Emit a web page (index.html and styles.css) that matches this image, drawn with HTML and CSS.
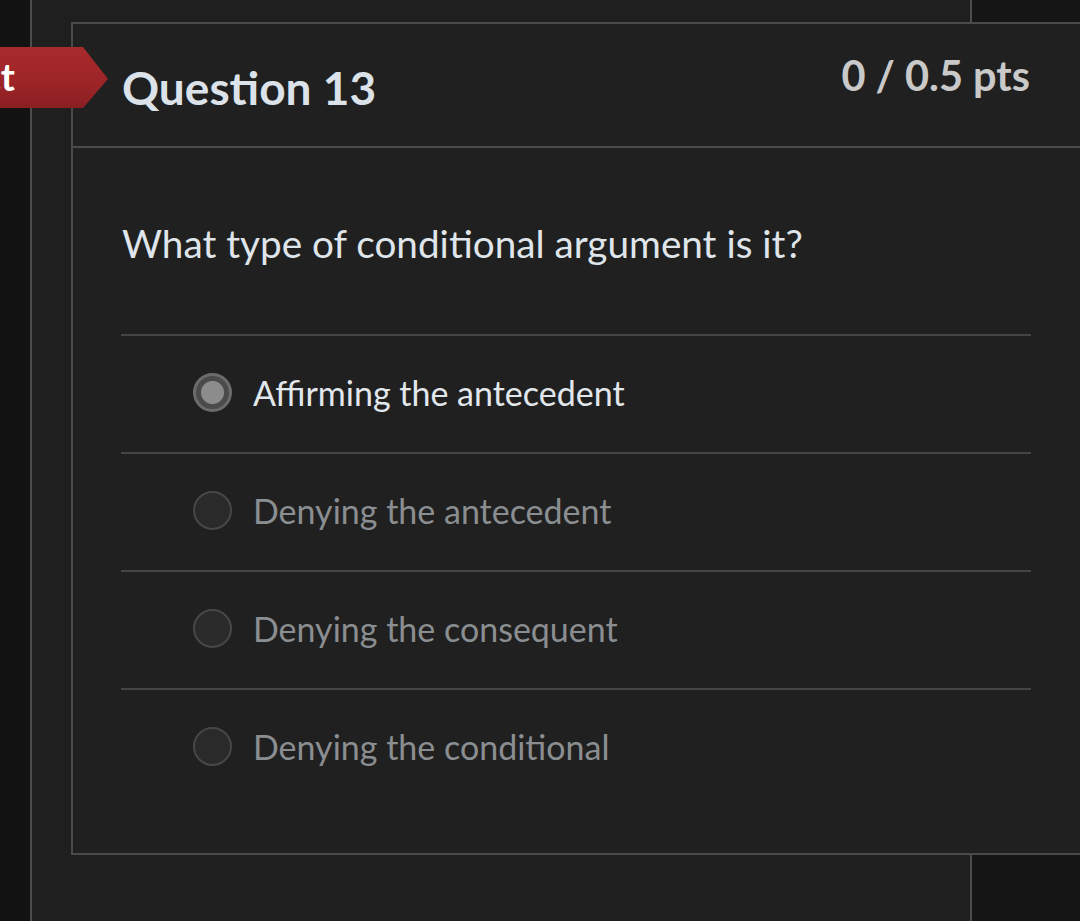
FILE: index.html
```html
<!DOCTYPE html>
<html lang="en">
<head>
<meta charset="utf-8">
<title>Question 13</title>
<link rel="stylesheet" href="styles.css">
</head>
<body>
<div class="page">
  <div class="leftbar"></div>
  <div class="main">
    <div class="card">
      <div class="flag"><span class="flag-text">Incorrect</span></div>
      <header class="qhead">
        <h2 class="qtitle">Question 13</h2>
        <div class="pts">0 / 0.5 pts</div>
      </header>
      <div class="qbody">
        <p class="qtext">What type of conditional argument is it?</p>
        <div class="answers">
          <div class="answer selected"><span class="radio"></span><span class="label">Affirming the antecedent</span></div>
          <div class="answer"><span class="radio"></span><span class="label">Denying the antecedent</span></div>
          <div class="answer"><span class="radio"></span><span class="label">Denying the consequent</span></div>
          <div class="answer"><span class="radio"></span><span class="label">Denying the conditional</span></div>
        </div>
      </div>
    </div>
  </div>
  <div class="rightbar"></div>
</div>
</body>
</html>
```
FILE: styles.css
```css
html, body {
  margin: 0;
  padding: 0;
  background: #151515;
  overflow: hidden;
}
body {
  font-family: Lato, "Open Sans", sans-serif;
}
.page {
  display: flex;
  height: 921px;
  width: 1080px;
  overflow: hidden;
}
.leftbar {
  width: 30px;
  flex: none;
  background: #121212;
}
.main {
  width: 938px;
  flex: none;
  background: #1f1f1f;
  border-left: 2px solid #4c4c4c;
  border-right: 2px solid #4c4c4c;
  padding-top: 22px;
}
.rightbar {
  flex: 1;
  background: #151515;
}
.card {
  position: relative;
  margin-left: 39px;
  width: 1040px;
  height: 833px;
  box-sizing: border-box;
  border: 2px solid #4a4a4a;
  border-right: none;
  background: #202020;
}
.flag {
  position: absolute;
  left: -73px;
  top: 23px;
  width: 108px;
  height: 61px;
  background: linear-gradient(to bottom, #a82b2c 0%, #9c2427 60%, #8a1f22 100%);
  clip-path: polygon(0 0, 83px 0, 108px 32px, 83px 61px, 0 61px);
  display: flex;
  align-items: center;
  justify-content: flex-end;
  padding-right: 93px;
  box-sizing: border-box;
}
.flag-text {
  color: #ffffff;
  font-weight: 700;
  font-size: 38px;
  white-space: nowrap;
  line-height: 1;
  margin-top: -4px;
}
.qhead {
  display: flex;
  justify-content: space-between;
  align-items: flex-start;
  height: 124px;
  box-sizing: border-box;
  border-bottom: 2px solid #4a4a4a;
  padding-left: 49px;
  padding-right: 81px;
}
.qtitle {
  margin: 36px 0 0 0;
  font-size: 46px;
  font-weight: 700;
  line-height: 1.2;
  color: #dbe2e9;
}
.pts {
  margin-top: 27px;
  font-size: 41.5px;
  font-weight: 700;
  line-height: 1.2;
  color: #c9c9c9;
}
.qbody {
  padding-left: 48px;
  width: 910px;
}
.qtext {
  margin: 72px 0 0 1px;
  font-size: 38.7px;
  line-height: 1.2;
  color: #dfe5ea;
  padding-bottom: 68px;
}
.answer {
  display: flex;
  align-items: center;
  height: 118px;
  border-top: 2px solid #444444;
  padding-left: 72px;
  box-sizing: border-box;
}
.radio {
  width: 39px;
  height: 39px;
  border-radius: 50%;
  box-sizing: border-box;
  background: #2a2a2a;
  border: 2px solid #474747;
  flex: none;
  margin-top: -4px;
}
.label {
  margin-left: 21px;
  font-size: 34px;
  color: #8b8e91;
  margin-top: -4px;
}
.answer.selected .radio {
  border: 3px solid #6b6b6b;
  background: radial-gradient(circle, #8c8c8c 0 11px, #4b4b4b 12px);
}
.answer.selected .label {
  color: #e2e7ec;
}
```
